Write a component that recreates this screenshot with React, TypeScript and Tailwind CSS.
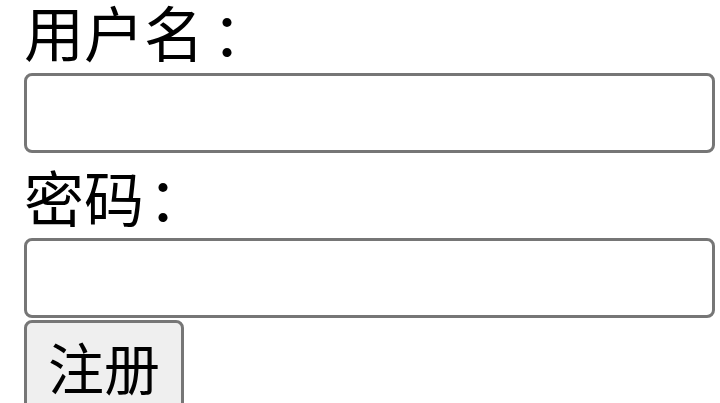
import React, { useState } from 'react';

export default function App() {
  const [username, setUsername] = useState('');
  const [password, setPassword] = useState('');

  return (
    <div className="min-h-screen bg-white text-black font-['Noto_Sans_CJK_SC',sans-serif] overflow-hidden">
      <form
        onSubmit={(e) => e.preventDefault()}
        className="flex flex-col items-start pl-[24px] -mt-[12px]"
      >
        <label className="block text-[60px] leading-[85px] whitespace-nowrap">
          用户名<span className="ml-[8px]">：</span>
        </label>
        <input
          type="text"
          value={username}
          onChange={(e) => setUsername(e.target.value)}
          className="block w-[691px] h-[80px] bg-white border-[3px] border-[#767676] rounded-[8px] px-2 text-[40px] outline-none"
        />
        <label className="block text-[60px] leading-[85px] whitespace-nowrap">
          密码<span className="ml-[4px]">：</span>
        </label>
        <input
          type="password"
          value={password}
          onChange={(e) => setPassword(e.target.value)}
          className="block w-[691px] h-[80px] bg-white border-[3px] border-[#767676] rounded-[8px] px-2 text-[40px] outline-none"
        />
        <button
          type="submit"
          className="mt-[2px] bg-[#efefef] border-[3px] border-[#767676] rounded-[8px] px-[21px] pt-[1px] pb-[4px] text-[56px] leading-normal whitespace-nowrap"
        >
          注册
        </button>
      </form>
    </div>
  );
}
